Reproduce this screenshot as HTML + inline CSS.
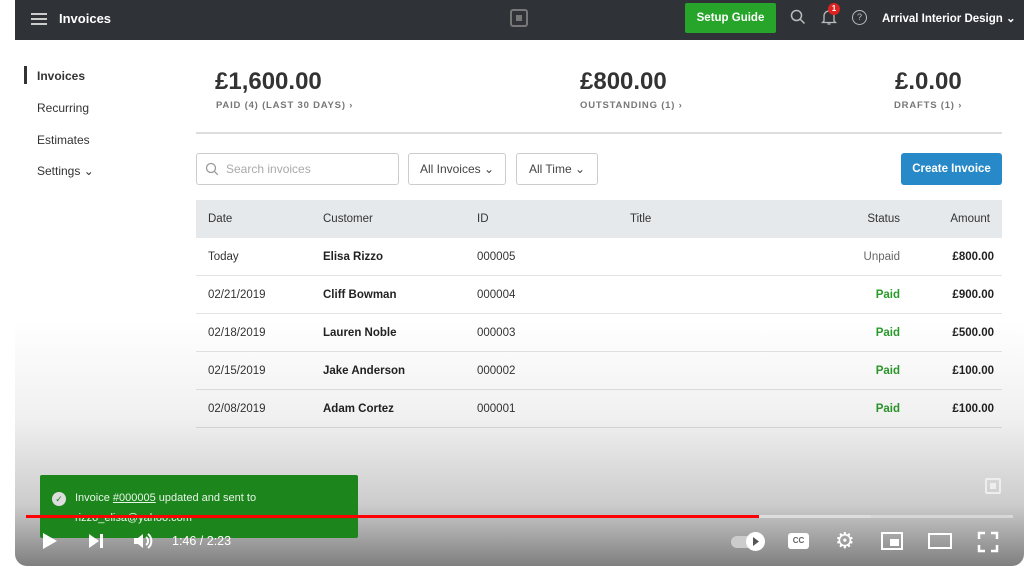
<!DOCTYPE html><html><head><style>
*{margin:0;padding:0;box-sizing:border-box}
body{width:1024px;height:568px;background:#fff;font-family:"Liberation Sans",sans-serif;position:relative;overflow:hidden;color:#333}
#f{position:absolute;left:15px;top:0;width:1009px;height:566px;background:#fff;border-radius:0 0 12px 12px;overflow:hidden}
.a{position:absolute;white-space:nowrap}
.top{position:absolute;left:0;top:0;width:1009px;height:40px;background:#2f3237}
.nav{font-size:12px;color:#333}
.big{font-size:24px;font-weight:bold;color:#333}
.lbl{font-size:9.5px;font-weight:bold;color:#777;letter-spacing:.8px}
.box{position:absolute;border:1px solid #ccc;border-radius:3px;height:32px;top:153px;font-size:12px;color:#444;line-height:30px}
.row{position:absolute;left:181px;width:806px;height:38px;border-bottom:1px solid #e3e3e3;font-size:11.5px;line-height:38px}
.row span{position:absolute}
.b{font-weight:bold;color:#222}
.g{color:#2a9b2a;font-weight:bold}
#ov{position:absolute;left:0;top:320px;width:1009px;height:246px;background:linear-gradient(rgba(0,0,0,0),rgba(0,0,0,.06) 40%,rgba(0,0,0,.2) 75%,rgba(0,0,0,.5))}
</style></head><body><div id="f">
<div class="top">
<div class="a" style="left:16px;top:13px;width:16px;height:2px;background:#ccc;box-shadow:0 5px 0 #ccc,0 10px 0 #ccc"></div>
<div class="a" style="left:44px;top:11px;color:#fff;font-size:13px;font-weight:bold">Invoices</div>
<div class="a" style="left:495px;top:9px;width:18px;height:18px;border:2px solid #777;border-radius:3px"><div style="margin:4px;width:6px;height:6px;background:#777"></div></div>
<div class="a" style="left:670px;top:3px;width:91px;height:30px;background:#27a52a;border-radius:2px;color:#fff;font-size:11.5px;font-weight:bold;text-align:center;line-height:30px">Setup Guide</div>
<svg class="a" style="left:775px;top:9px" width="16" height="16"><circle cx="6.5" cy="6.5" r="5" fill="none" stroke="#bbb" stroke-width="1.5"/><path d="M10 10l4.5 4.5" stroke="#bbb" stroke-width="1.5"/></svg>
<svg class="a" style="left:806px;top:8px" width="16" height="18"><path d="M3 13V8a5 5 0 0110 0v5l1.5 1.5h-13z M6.5 16h3" fill="none" stroke="#bbb" stroke-width="1.3"/></svg>
<div class="a" style="left:813px;top:3px;width:12px;height:12px;border-radius:6px;background:#d22;color:#fff;font-size:8px;font-weight:bold;text-align:center;line-height:12px">1</div>
<div class="a" style="left:837px;top:10px;width:15px;height:15px;border:1.3px solid #bbb;border-radius:8px;color:#bbb;font-size:9px;text-align:center;line-height:13px">?</div>
<div class="a" style="left:867px;top:11px;color:#fff;font-size:11.5px;font-weight:bold">Arrival Interior Design ⌄</div>
</div>
<div class="a" style="left:9px;top:66px;width:3px;height:18px;background:#333"></div>
<div class="a nav" style="left:22px;top:69px;font-weight:bold">Invoices</div>
<div class="a nav" style="left:22px;top:101px">Recurring</div>
<div class="a nav" style="left:22px;top:133px">Estimates</div>
<div class="a nav" style="left:22px;top:164px">Settings ⌄</div>
<div class="a big" style="left:200px;top:68px">£1,600.00</div>
<div class="a lbl" style="left:201px;top:100px">PAID (4) (LAST 30 DAYS) ›</div>
<div class="a big" style="left:565px;top:68px">£800.00</div>
<div class="a lbl" style="left:565px;top:100px">OUTSTANDING (1) ›</div>
<div class="a big" style="left:880px;top:68px">£.0.00</div>
<div class="a lbl" style="left:879px;top:100px">DRAFTS (1) ›</div>
<div class="a" style="left:181px;top:132px;width:806px;height:2px;background:#ddd"></div>
<div class="box" style="left:181px;width:203px;color:#aaa;padding-left:29px">Search invoices
<svg style="position:absolute;left:8px;top:8px" width="14" height="14"><circle cx="6" cy="6" r="4.5" fill="none" stroke="#999" stroke-width="1.3"/><path d="M9.3 9.3l3.5 3.5" stroke="#999" stroke-width="1.3"/></svg></div>
<div class="box" style="left:393px;width:98px;text-align:center">All Invoices ⌄</div>
<div class="box" style="left:501px;width:82px;text-align:center">All Time ⌄</div>
<div class="a" style="left:886px;top:153px;width:101px;height:32px;background:#2789c8;border-radius:3px;color:#fff;font-size:11.5px;font-weight:bold;text-align:center;line-height:32px">Create Invoice</div>
<div class="row" style="top:200px;background:#e6e9eb;border:0"><span style="left:12px">Date</span><span style="left:127px">Customer</span><span style="left:281px">ID</span><span style="left:434px">Title</span><span style="right:102px">Status</span><span style="right:12px">Amount</span></div>
<div class="row" style="top:238px"><span style="left:12px">Today</span><span class="b" style="left:127px">Elisa Rizzo</span><span style="left:281px">000005</span><span style="right:102px;color:#666">Unpaid</span><span class="b" style="right:8px">£800.00</span></div>
<div class="row" style="top:276px"><span style="left:12px">02/21/2019</span><span class="b" style="left:127px">Cliff Bowman</span><span style="left:281px">000004</span><span class="g" style="right:102px">Paid</span><span class="b" style="right:8px">£900.00</span></div>
<div class="row" style="top:314px"><span style="left:12px">02/18/2019</span><span class="b" style="left:127px">Lauren Noble</span><span style="left:281px">000003</span><span class="g" style="right:102px">Paid</span><span class="b" style="right:8px">£500.00</span></div>
<div class="row" style="top:352px"><span style="left:12px">02/15/2019</span><span class="b" style="left:127px">Jake Anderson</span><span style="left:281px">000002</span><span class="g" style="right:102px">Paid</span><span class="b" style="right:8px">£100.00</span></div>
<div class="row" style="top:390px"><span style="left:12px">02/08/2019</span><span class="b" style="left:127px">Adam Cortez</span><span style="left:281px">000001</span><span class="g" style="right:102px">Paid</span><span class="b" style="right:8px">£100.00</span></div>
<div id="ov"></div>
<div class="a" style="left:25px;top:475px;width:318px;height:63px;background:#1c861c;border-radius:2px;color:#e8f5e8;font-size:11px"><div style="position:absolute;left:12px;top:17px;width:14px;height:14px;border-radius:7px;background:#ddd;color:#1c861c;font-size:9px;text-align:center;line-height:14px">✓</div><div style="position:absolute;left:35px;top:17px">Invoice <u>#000005</u> updated and sent to</div><div style="position:absolute;left:35px;top:37px">rizzo_elisa@yahoo.com</div></div>
<div class="a" style="left:970px;top:478px;width:16px;height:16px;border:2px solid #eee;border-radius:2px"><div style="margin:3px;width:6px;height:6px;background:#eee"></div></div>
<div class="a" style="left:11px;top:515px;width:733px;height:3px;background:#f00"></div>
<div class="a" style="left:744px;top:515px;width:112px;height:3px;background:#ddd"></div>
<div class="a" style="left:856px;top:515px;width:142px;height:3px;background:rgba(255,255,255,.4)"></div>
<svg class="a" style="left:25px;top:531px" width="20" height="20"><path d="M3 2v16l14-8z" fill="#fff"/></svg>
<svg class="a" style="left:72px;top:532px" width="18" height="18"><path d="M2 2v14l10-7z M13 2h3v14h-3z" fill="#fff"/></svg>
<svg class="a" style="left:117px;top:531px" width="22" height="20"><path d="M2 7h4l5-4v14l-5-4H2z" fill="#fff"/><path d="M14 6a5 5 0 010 8M16 3a9 9 0 010 14" fill="none" stroke="#fff" stroke-width="2"/></svg>
<div class="a" style="left:157px;top:534px;color:#fff;font-size:12.5px">1:46 / 2:23</div>
<div class="a" style="left:716px;top:536px;width:24px;height:12px;border-radius:6px;background:#ccc"></div>
<div class="a" style="left:731px;top:532px;width:19px;height:19px;border-radius:10px;background:#fff"><svg width="19" height="19"><path d="M7 5v9l6-4.5z" fill="#555"/></svg></div>
<div class="a" style="left:773px;top:533px;width:21px;height:16px;border-radius:3px;background:#fff;color:#666;font-size:8px;font-weight:bold;text-align:center;line-height:16px">CC</div>
<div class="a" style="left:820px;top:528px;color:#fff;font-size:22px">⚙</div>
<div class="a" style="left:866px;top:532px;width:22px;height:18px;border:2px solid #fff"><div style="position:absolute;right:2px;bottom:2px;width:9px;height:7px;background:#fff"></div></div>
<div class="a" style="left:913px;top:533px;width:24px;height:16px;border:2px solid #fff"></div>
<svg class="a" style="left:962px;top:531px" width="22" height="22"><path d="M2 8V2h6M14 2h6v6M20 14v6h-6M8 20H2v-6" fill="none" stroke="#fff" stroke-width="2.5"/></svg>
</div></body></html>
